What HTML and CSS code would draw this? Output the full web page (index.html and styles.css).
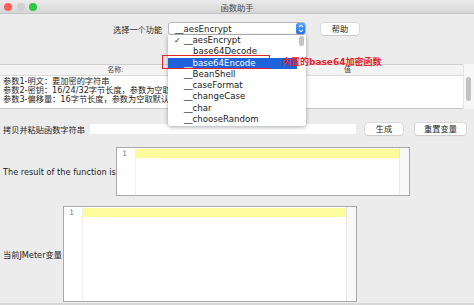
FILE: index.html
```html
<!DOCTYPE html>
<html>
<head>
<meta charset="utf-8">
<link rel="stylesheet" href="styles.css">
</head>
<body>
<div class="window">
  <div class="titlebar">
    <div class="lights">
      <span class="light red"></span>
      <span class="light gray"></span>
      <span class="light green"></span>
    </div>
    <div class="title">函数助手</div>
  </div>

  <div class="select-row">
    <span class="select-label">选择一个功能</span>
    <div class="combo">
      <span class="combo-text">__aesEncrypt</span>
      <span class="stepper">
        <svg width="6" height="9" viewBox="0 0 6 9"><path d="M1 3.2 L3 1.2 L5 3.2 M1 5.8 L3 7.8 L5 5.8" fill="none" stroke="#fff" stroke-width="1.1"/></svg>
      </span>
      <div class="dropdown">
        <div class="dd-list">
          <div class="dd-item"><span class="check">✓</span>__aesEncrypt</div>
          <div class="dd-item dd-shift">base64Decode</div>
          <div class="dd-item selected">__base64Encode</div>
          <div class="dd-item">__BeanShell</div>
          <div class="dd-item">__caseFormat</div>
          <div class="dd-item">__changeCase</div>
          <div class="dd-item">__char</div>
          <div class="dd-item">__chooseRandom</div>
        </div>
        <div class="dd-scroll"><span class="dd-thumb"></span></div>
      </div>
      <div class="annot-box"></div>
      <div class="annot-text">内置的base64加密函数</div>
    </div>
    <button class="btn btn-help">帮助</button>
  </div>

  <div class="table">
    <div class="table-main">
      <div class="thead">
        <div class="th th-name">名称:</div>
        <div class="th th-val">值</div>
      </div>
      <div class="tbody">
        <div class="tr">参数1-明文：要加密的字符串</div>
        <div class="tr">参数2-密钥：16/24/32字节长度，参数为空取默认密钥</div>
        <div class="tr">参数3-偏移量：16字节长度，参数为空取默认偏移量</div>
      </div>
    </div>
    <div class="table-scroll"><span class="table-thumb"></span></div>
  </div>

  <div class="copy-row">
    <span class="copy-label">拷贝并粘贴函数字符串</span>
    <div class="field"></div>
    <button class="btn btn-gen">生成</button>
    <button class="btn btn-reset">重置变量</button>
  </div>

  <div class="editor-row result-row">
    <span class="row-label label-result">The result of the function is</span>
    <div class="editor editor-result">
      <div class="gutter">1</div>
      <div class="code"><div class="current-line"></div></div>
      <div class="vstrip"></div>
    </div>
  </div>

  <div class="editor-row vars-row">
    <span class="row-label label-vars">当前JMeter变量</span>
    <div class="editor editor-vars">
      <div class="gutter">1</div>
      <div class="code"><div class="current-line"></div></div>
      <div class="vstrip"></div>
    </div>
  </div>
</div>
</body>
</html>
```

FILE: styles.css
```css
* { box-sizing: border-box; }
html, body { margin: 0; padding: 0; }
body {
  width: 474px;
  height: 305px;
  overflow: hidden;
  background: #ececec;
  font-family: "DejaVu Sans", "Noto Sans CJK SC", sans-serif;
  font-size: 8.2px;
  color: #1e1e1e;
}
.window {
  width: 474px;
  height: 305px;
  display: flex;
  flex-direction: column;
  border-bottom: 2px solid #d8d8d8;
}

/* title bar */
.titlebar {
  height: 14px;
  flex: none;
  position: relative;
  display: flex;
  align-items: center;
  justify-content: center;
  background: linear-gradient(#ebebeb, #d6d6d6);
  border-bottom: 1px solid #c4c4c4;
}
.lights {
  position: absolute;
  left: 4px;
  top: 3px;
  display: flex;
  gap: 4.5px;
}
.light { width: 8px; height: 8px; border-radius: 50%; display: block; }
.light.red { background: #fc5f57; }
.light.gray { background: #d0d0d0; }
.light.green { background: #2bc840; }
.title { color: #4a4a4a; font-size: 8.3px; }

/* select row */
.select-row {
  flex: none;
  margin-top: 8px;
  height: 13px;
  display: flex;
  align-items: center;
  padding-left: 113px;
}
.select-label { width: 50px; margin-right: 5px; white-space: nowrap; }
.combo {
  position: relative;
  width: 138px;
  height: 13px;
  background: #fff;
  border: 1px solid #b8b8b8;
  border-radius: 3px;
  display: flex;
  align-items: center;
  padding-left: 6px;
}
.combo-text { flex: 1; font-size: 8.6px; }
.stepper {
  width: 9px;
  height: 11px;
  background: linear-gradient(#5aa2fa, #1e6ff0);
  border-radius: 2px;
  display: flex;
  align-items: center;
  justify-content: center;
}
.btn {
  font-family: inherit;
  font-size: 8.2px;
  color: #1e1e1e;
  background: #fff;
  border: none;
  border-radius: 3px;
  box-shadow: 0 0 0 0.5px #c8c8c8, 0 1px 1px rgba(0,0,0,0.12);
  height: 12px;
  padding: 0;
  line-height: 12px;
}
.btn-help { width: 38px; margin-left: 15px; }

/* dropdown overlay */
.dropdown {
  position: absolute;
  left: -1px;
  top: 12px;
  width: 138px;
  height: 91px;
  background: #fff;
  display: flex;
  box-shadow: 0 1px 4px rgba(0,0,0,0.35);
  border-radius: 0 0 3px 3px;
  z-index: 5;
}
.dd-list { flex: 1; }
.dd-item {
  height: 11.3px;
  line-height: 11.3px;
  padding-left: 16px;
  font-size: 8.6px;
  color: #1a1a1a;
  position: relative;
  white-space: nowrap;
}
.dd-item.dd-shift { padding-left: 25px; }
.dd-item.selected { background: #1f63dc; color: #fff; }
.check { position: absolute; left: 6px; top: 0; font-size: 8px; }
.dd-scroll { width: 9px; padding: 1px 2px; }
.dd-thumb { display: block; width: 5px; height: 10px; border-radius: 3px; background: #c2c2c2; }

.annot-box {
  position: absolute;
  left: -7px;
  top: 32px;
  width: 108px;
  height: 14px;
  border: 1.5px solid #e3242b;
  z-index: 6;
}
.annot-text {
  position: absolute;
  left: 113px;
  top: 34px;
  line-height: 10px;
  color: #e3242b;
  font-weight: bold;
  font-size: 9px;
  white-space: nowrap;
  z-index: 6;
}

/* parameter table */
.table {
  flex: none;
  margin-top: 29px;
  height: 45px;
  display: flex;
}
.table-main {
  width: 463px;
  background: #fff;
  border-top: 1px solid #d0d0d0;
  border-bottom: 1px solid #c8c8c8;
  display: flex;
  flex-direction: column;
}
.thead {
  height: 11px;
  display: flex;
  align-items: flex-end;
  background: #f4f4f4;
  border-bottom: 1px solid #dadada;
}
.th {
  font-size: 7px;
  color: #444;
  text-align: center;
  line-height: 8px;
  padding-bottom: 1px;
}
.th-name { width: 232px; border-right: 1px solid #dcdcdc; }
.th-val { flex: 1; }
.tbody { padding-left: 3px; padding-top: 1px; }
.tr { height: 9px; line-height: 9px; white-space: nowrap; overflow: hidden; font-size: 8.2px; }
.table-scroll { width: 11px; background: #f7f7f7; border-left: 1px solid #e4e4e4; padding: 13px 0 0 2px; }
.table-thumb { display: block; width: 5px; height: 24px; background: #c2c2c2; border-radius: 3px; }

/* copy row */
.copy-row {
  flex: none;
  margin-top: 14px;
  height: 12px;
  display: flex;
  align-items: center;
  padding-left: 3px;
}
.copy-label { width: 87px; white-space: nowrap; }
.field { width: 266px; height: 10px; background: #fff; }
.btn-gen { width: 38px; margin-left: 9px; }
.btn-reset { width: 51px; margin-left: 12px; }

/* editors */
.editor-row {
  flex: none;
  display: flex;
  align-items: center;
  padding-left: 3px;
}
.result-row { margin-top: 12px; height: 49px; }
.vars-row { margin-top: 10px; height: 96px; }
.row-label { white-space: nowrap; }
.label-result { width: 113px; }
.label-vars { width: 60px; }
.editor {
  width: 294px;
  height: 100%;
  background: #fff;
  border: 1px solid #a9a9a9;
  display: flex;
}
.gutter {
  width: 19px;
  text-align: right;
  padding-right: 8px;
  padding-top: 1px;
  font-size: 7.5px;
  color: #777;
  border-right: 1px solid #f0f0f0;
}
.code { flex: 1; padding-top: 1px; }
.current-line { height: 9px; background: #fdfc9c; }
.vstrip { width: 10px; background: #f9f9f9; border-left: 1px solid #e8e8e8; }
```
